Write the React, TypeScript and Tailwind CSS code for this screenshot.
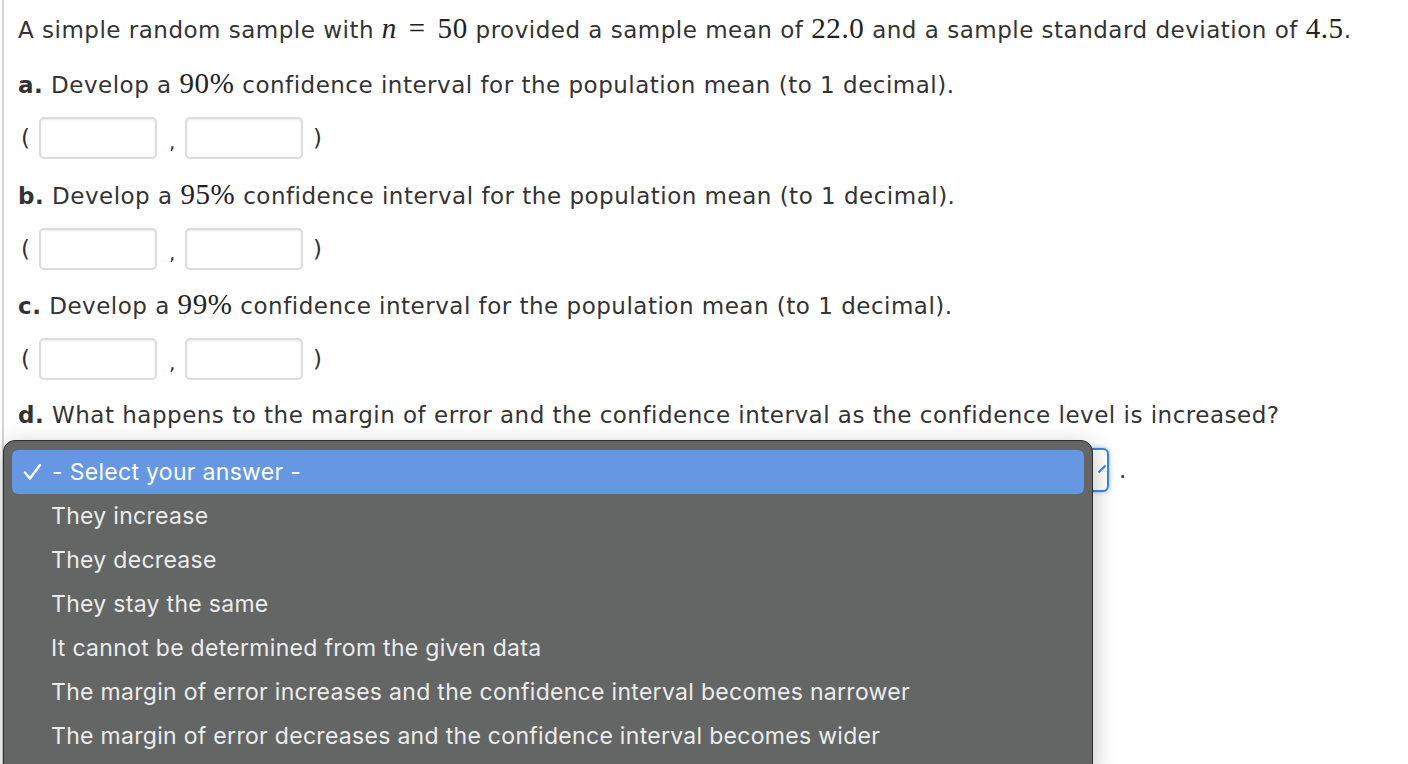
import React from 'react';

const sans = "font-['DejaVu_Sans',Verdana,sans-serif]";
const serif = "font-['Liberation_Serif','Times_New_Roman',serif]";

function M({ children, italic }: { children: React.ReactNode; italic?: boolean }) {
  return (
    <span className={`${serif} text-[29px] tracking-[0.6px] text-[#222] ${italic ? 'italic' : ''}`}>{children}</span>
  );
}

function Interval() {
  return (
    <div className="flex h-[55.3px] items-center">
      <span className="w-[21px] pl-[3px] text-[23px]">(</span>
      <div className="h-[42px] w-[118px] rounded-[5px] border-2 border-[#dcdcdc] bg-white shadow-[inset_0_1px_2px_rgba(0,0,0,0.08)]" />
      <span className="w-[28px] pl-[12px] pt-[8px] text-[20px]">,</span>
      <div className="h-[42px] w-[118px] rounded-[5px] border-2 border-[#dcdcdc] bg-white shadow-[inset_0_1px_2px_rgba(0,0,0,0.08)]" />
      <span className="pl-[10px] text-[23px]">)</span>
    </div>
  );
}

function Line({ children }: { children: React.ReactNode }) {
  return <p className="h-[55.3px] whitespace-nowrap leading-[56px]">{children}</p>;
}

const options = [
  'They increase',
  'They decrease',
  'They stay the same',
  'It cannot be determined from the given data',
  'The margin of error increases and the confidence interval becomes narrower',
  'The margin of error decreases and the confidence interval becomes wider',
];

export default function App() {
  return (
    <div className={`relative h-[764px] overflow-hidden bg-white ${sans} text-[23px] tracking-[0.5px] text-[#333]`}>
      <div className="ml-[2px] h-full border-l-2 border-[#d4d4d4] pl-[14px]">
        <Line>
          A simple random sample with <M italic>n</M> <M><span className="mx-[4px]">=</span></M> <M>50</M> provided a sample mean of{' '}
          <M>22.0</M> and a sample standard deviation of <M>4.5</M>.
        </Line>
        <Line>
          <b>a.</b> Develop a <M>90%</M> confidence interval for the population mean (to 1 decimal).
        </Line>
        <Interval />
        <Line>
          <b>b.</b> Develop a <M>95%</M> confidence interval for the population mean (to 1 decimal).
        </Line>
        <Interval />
        <Line>
          <b>c.</b> Develop a <M>99%</M> confidence interval for the population mean (to 1 decimal).
        </Line>
        <Interval />
        <Line>
          <b>d.</b> What happens to the margin of error and the confidence interval as the confidence level is increased?
        </Line>
        <div className="flex h-[55.3px] items-center">
          <div className="relative h-[44px] w-[1091px] rounded-[6px] border-2 border-[#3b86d8] bg-white shadow-[0_0_4px_rgba(59,134,216,0.6)]">
            <span className="absolute right-[4px] top-[14px] h-[10px] w-[2px] rotate-45 bg-[#3b86d8]" />
          </div>
          <span className="pl-[10px]">.</span>
        </div>
      </div>

      <div className="absolute left-[3px] top-[440px] h-[340px] w-[1090px] rounded-[12px] border border-[#2e2e2e] bg-[#646666] px-[8px] pt-[9px] font-['Inter','Noto_Sans',sans-serif] text-[23px] tracking-[0.3px] text-[#ececec] shadow-[0_6px_24px_rgba(0,0,0,0.25)]">
        <div className="flex h-[44px] items-center rounded-[6px] bg-[#6697e2] text-white">
          <svg className="ml-[11px] h-[18px] w-[19px]" viewBox="0 0 19 18" fill="none">
            <polyline points="2,9.5 7,15.5 17,2" stroke="white" strokeWidth="2.4" strokeLinecap="round" strokeLinejoin="round" />
          </svg>
          <span className="pl-[10px]">- Select your answer -</span>
        </div>
        {options.map((o) => (
          <div key={o} className="flex h-[44px] items-center pl-[39px]">
            {o}
          </div>
        ))}
      </div>
    </div>
  );
}
